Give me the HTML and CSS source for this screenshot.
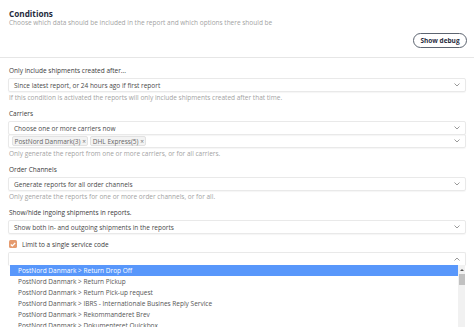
FILE: index.html
```html
<!DOCTYPE html>
<html>
<head>
<title>Conditions</title>
<link rel="stylesheet" href="styles.css">
<meta charset="utf-8">
</head>
<body>
<div class="page">

<div class="head">
<h1 class="title">Conditions</h1>
<p class="subtitle">Choose which data should be included in the report and which options there should be</p>
<div class="head-actions">
<button class="btn-outline">Show debug</button>
</div>
</div>

<div class="conditions">

<div class="group">
<label class="label">Only include shipments created after...</label>
<div class="select">
<span>Since latest report, or 24 hours ago if first report</span>
<svg class="chev" width="6" height="4" viewBox="0 0 6 4"><polyline points="0.5,0.5 3,3 5.5,0.5" /></svg>
</div>
<p class="help">If this condition is activated the reports will only include shipments created after that time.</p>
</div>

<div class="group">
<label class="label">Carriers</label>
<div class="select">
<span>Choose one or more carriers now</span>
<svg class="chev" width="6" height="4" viewBox="0 0 6 4"><polyline points="0.5,0.5 3,3 5.5,0.5" /></svg>
</div>
<div class="select select-tags">
<div class="tags">
<span class="tag">PostNord Danmark(3) <b>&times;</b></span>
<span class="tag">DHL Express(5) <b>&times;</b></span>
</div>
<svg class="chev" width="6" height="4" viewBox="0 0 6 4"><polyline points="0.5,0.5 3,3 5.5,0.5" /></svg>
</div>
<p class="help">Only generate the report from one or more carriers, or for all carriers.</p>
</div>

<div class="group">
<label class="label">Order Channels</label>
<div class="select">
<span>Generate reports for all order channels</span>
<svg class="chev" width="6" height="4" viewBox="0 0 6 4"><polyline points="0.5,0.5 3,3 5.5,0.5" /></svg>
</div>
<p class="help">Only generate the reports for one or more order channels, or for all.</p>
</div>

<div class="group">
<label class="label">Show/hide ingoing shipments in reports.</label>
<div class="select">
<span>Show both in- and outgoing shipments in the reports</span>
<svg class="chev" width="6" height="4" viewBox="0 0 6 4"><polyline points="0.5,0.5 3,3 5.5,0.5" /></svg>
</div>
</div>

<div class="check-row">
<span class="checkbox"><svg width="6" height="5" viewBox="0 0 6 5"><polyline points="0.8,2.5 2.3,4 5.2,1" /></svg></span>
<span class="check-label">Limit to a single service code</span>
</div>

<div class="combo">
<div class="select select-open">
<span></span>
<svg class="chev" width="6" height="4" viewBox="0 0 6 4"><polyline points="0.5,3.5 3,1 5.5,3.5" /></svg>
</div>
<div class="dropdown">
<ul class="options">
<li class="active">PostNord Danmark &gt; Return Drop Off</li>
<li>PostNord Danmark &gt; Return Pickup</li>
<li>PostNord Danmark &gt; Return Pick-up request</li>
<li>PostNord Danmark &gt; IBRS - Internationale Busines Reply Service</li>
<li>PostNord Danmark &gt; Rekommanderet Brev</li>
<li>PostNord Danmark &gt; Dokumenteret Quickbox</li>
</ul>
<div class="scrollbar">
<div class="scroll-up"></div>
<div class="scroll-thumb"></div>
</div>
</div>
</div>

</div>

</div>
</body>
</html>
```

FILE: styles.css
```css
*
{
padding:0;
margin:0;
box-sizing:border-box;
}

body
{
font-family:"Open Sans", sans-serif;
font-size:6.5px;
color:#3b3b3b;
background:#fff;
overflow:hidden;
}

.page
{
width:474px;
height:327px;
overflow:hidden;
}

.head
{
padding:8px 7px 0 9px;
border-bottom:1px solid #e6e6e6;
height:58px;
}

.title
{
font-size:8.2px;
font-weight:700;
line-height:11px;
color:#1f2b3d;
}

.subtitle
{
font-size:6.5px;
line-height:8px;
color:#a3a3a3;
}

.head-actions
{
display:flex;
justify-content:flex-end;
margin-top:6px;
}

.btn-outline
{
font-family:"Open Sans", sans-serif;
font-size:6.5px;
font-weight:700;
color:#1f2b3d;
background:#fff;
border:1px solid #5c6470;
border-radius:8px;
height:15px;
width:54px;
}

.conditions
{
padding:0 8px;
}

.group
{
display:flex;
flex-direction:column;
padding-top:8px;
}

.group:first-child
{
padding-top:9px;
}

.label
{
line-height:8px;
padding-left:1px;
margin-bottom:3px;
color:#3b3b3b;
}

.select
{
display:flex;
align-items:center;
justify-content:space-between;
height:14px;
padding:0 5px;
border:1px solid #e9e9e9;
border-radius:2px;
box-shadow:0 1px 1px rgba(0,0,0,0.04);
color:#4a4a4a;
}

.select-tags
{
margin-top:-1px;
padding-left:3px;
}

.chev
{
fill:none;
stroke:#9a9a9a;
stroke-width:1;
}

.tags
{
display:flex;
gap:2px;
}

.tag
{
height:10px;
line-height:9px;
padding:0 1.5px;
background:#f3f3f3;
border:1px solid #e2e2e2;
border-radius:2px;
color:#666;
font-size:6.5px;
}

.tag b
{
font-weight:400;
color:#777;
}

.help
{
line-height:8px;
margin-top:2px;
padding-left:1px;
color:#a3a3a3;
}

.check-row
{
display:flex;
align-items:center;
gap:5px;
margin-top:6px;
padding-left:1px;
height:8px;
}

.checkbox
{
display:flex;
align-items:center;
justify-content:center;
width:8px;
height:8px;
border-radius:1.5px;
background:#e59b6f;
}

.checkbox svg
{
fill:none;
stroke:#fff;
stroke-width:1.2;
}

.combo
{
margin-top:4px;
}

.select-open
{
height:13px;
border-bottom:none;
border-radius:2px 2px 0 0;
}

.dropdown
{
display:flex;
margin:0 1px 0 2px;
}

.options
{
list-style:none;
flex:1;
}

.options li
{
height:11px;
line-height:11px;
padding-left:8px;
color:#555;
}

.options li.active
{
background:#5897fb;
color:#fff;
}

.scrollbar
{
width:7px;
background:#f1f1f1;
display:flex;
flex-direction:column;
align-items:center;
}

.scroll-up
{
width:0;
height:0;
margin:4px 0 3px;
border-left:2px solid transparent;
border-right:2px solid transparent;
border-bottom:2px solid #555;
}

.scroll-thumb
{
width:6px;
height:11px;
background:#c1c1c1;
}
```
